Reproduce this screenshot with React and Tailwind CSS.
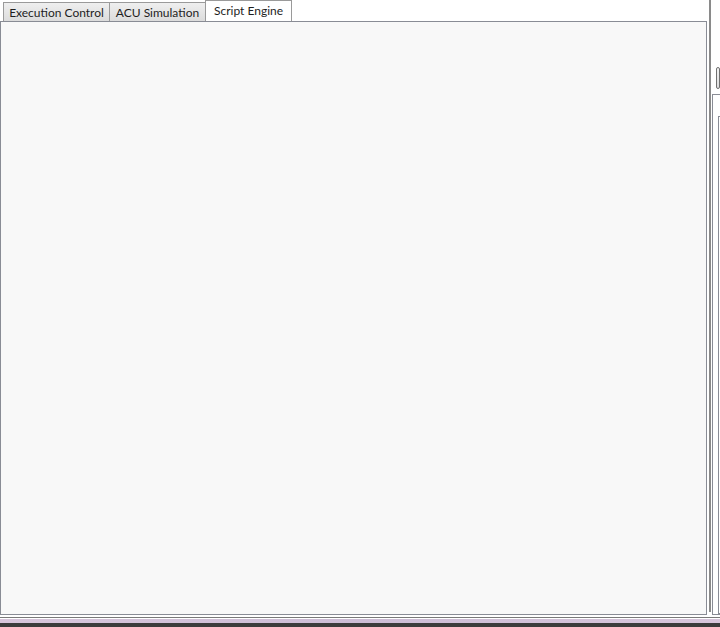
import React from "react";

const tabs = [
  { label: "Execution Control", w: "w-[107px]" },
  { label: "ACU Simulation", w: "w-[97px]" },
];

export default function App() {
  return (
    <div
      className="w-[720px] h-[627px] bg-white flex flex-col overflow-hidden text-[#1e1e1e]"
      style={{ fontFamily: '"Segoe UI", Lato, "Liberation Sans", sans-serif' }}
    >
      <div className="flex h-[615px]">
        {/* left tab host */}
        <div className="w-[707px] flex flex-col">
          <div className="h-[21px] flex items-end pl-[3px]">
            {tabs.map((t) => (
              <div
                key={t.label}
                className={`${t.w} h-[19px] border border-b-0 border-[#9a9a9a] bg-gradient-to-b from-[#efefef] to-[#dcdcdc] text-[12px] leading-[19px] flex justify-center -mr-px`}
              >
                {t.label}
              </div>
            ))}
            <div className="w-[87px] h-[21px] border border-b-0 border-[#9a9a9a] bg-white text-[12px] leading-[20px] flex justify-center">
              Script Engine
            </div>
          </div>
          <div className="flex-1 border border-[#898c95] bg-[#f8f8f8]" />
        </div>
        {/* splitter */}
        <div className="w-[2px]" />
        <div className="w-[2px] h-[612px] bg-[#8a8a8a]" />
        {/* right pane */}
        <div className="flex-1 flex flex-col pl-px">
          <div className="h-[67px]" />
          <div className="ml-[4px] h-[22px] rounded-[3px] border border-[#707070] bg-gradient-to-b from-[#f2f2f2] to-[#dedede]" />
          <div className="h-[5px]" />
          <div className="flex-1 border border-r-0 border-[#898c95] bg-white pt-[21px] pl-[5px]">
            <div className="h-full border border-r-0 border-[#898c95]" />
          </div>
        </div>
      </div>
      {/* bottom bars */}
      <div className="h-[2px] bg-white" />
      <div className="h-[1px] bg-[#7a7a7a]" />
      <div className="h-[1px] bg-white" />
      <div className="h-[4px] bg-gradient-to-r from-[#d8c6dc] via-[#cdbdd6] to-[#d8c6dc]" />
      <div className="h-[4px] bg-[#3c3c3c]" />
    </div>
  );
}
